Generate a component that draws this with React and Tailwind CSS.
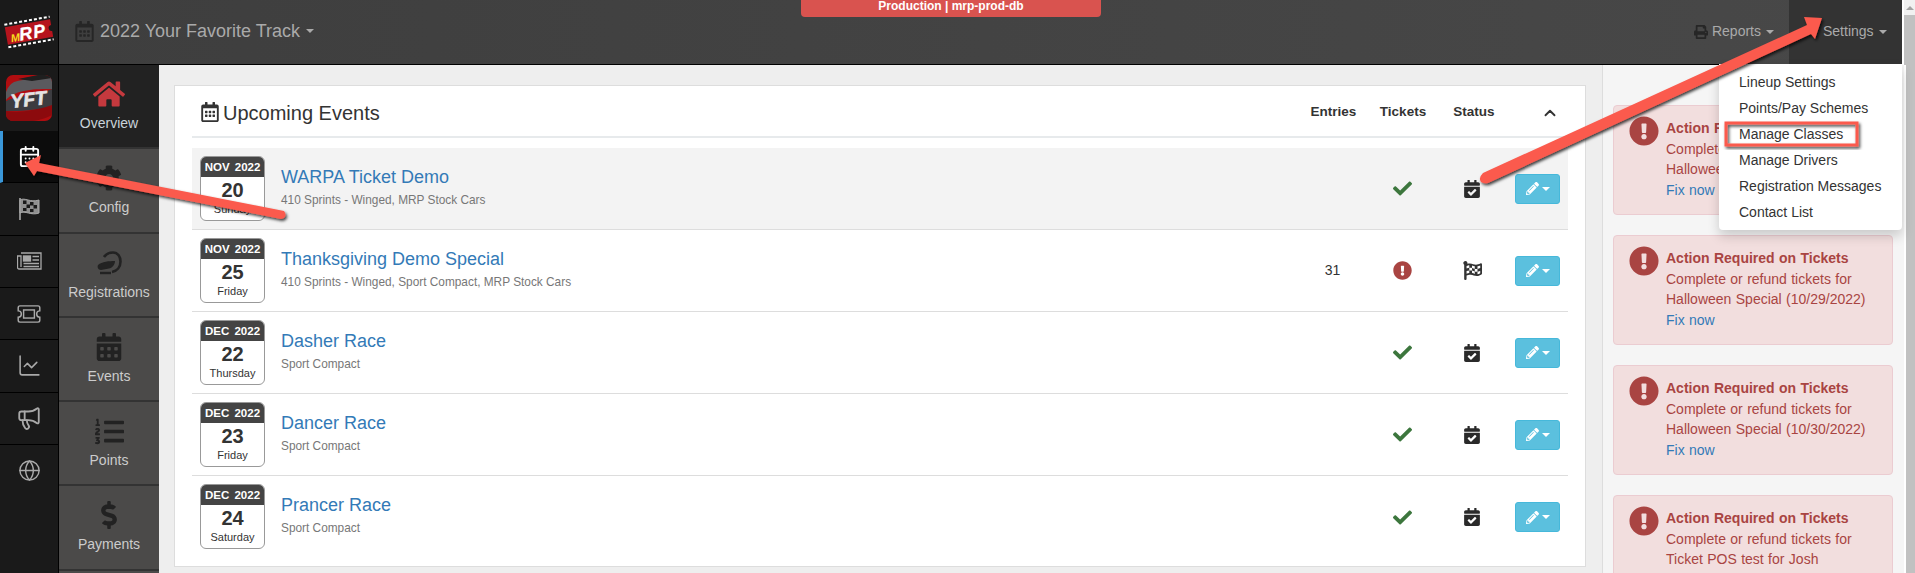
import React from "react";
import {
  FaCog, FaDollarSign, FaListOl, FaPrint, FaCheck, FaExclamationCircle, FaPencilAlt,
  FaCalendarCheck, FaFlagCheckered, FaRegCalendarAlt, FaCalendarAlt, FaHome,
} from "react-icons/fa";
import { ChartLine, Megaphone, Globe, ChevronUp, CalendarDays } from "lucide-react";

const Caret = ({ className = "" }) => (
  <span className={`inline-block w-0 h-0 border-x-[4px] border-x-transparent border-t-[4px] border-t-current ${className}`} />
);

const MrpLogo = () => (
  <svg width="50" height="34" viewBox="0 0 50 34">
    <g transform="rotate(-10 25 17)">
      <path d="M2 8 H48 V14 a3 3 0 0 0 0 6 V26 H2 Z" fill="#b5141d" />
      <path d="M2 5.5 H48" stroke="#fff" strokeWidth="2" strokeDasharray="3 2" />
      <path d="M2 28.5 H48" stroke="#fff" strokeWidth="2" strokeDasharray="3 2" />
      <text x="6" y="24" fontFamily="Liberation Sans" fontWeight="700" fontStyle="italic" fontSize="11" fill="#f7dc1d">M</text>
      <text x="15" y="24" fontFamily="Liberation Sans" fontWeight="700" fontStyle="italic" fontSize="18" fill="#fff" stroke="#fff" strokeWidth=".3" letterSpacing="1">RP</text>
    </g>
  </svg>
);

const YftLogo = () => (
  <svg width="46" height="46" viewBox="0 0 46 46" className="rounded-[7px]">
    <rect width="46" height="46" fill="#b00d10" />
    <path d="M0 46 V36 C14 38 30 36 46 28 V40 C38 44 30 46 24 46 Z" fill="#8c0a0d" />
    <path d="M8 7 C20 3 32 6 46 2 V14 C30 14 10 14 0 25 V17 C2 12 4 9 8 7 Z" fill="#5a5a5e" />
    <path d="M0 26 C12 20 30 22 46 14 V30 C30 36 14 36 0 36 Z" fill="#3c3c40" />
    <path d="M12 4 L32 0 L46 0 V3 L26 6 Z" fill="#1f1f1f" />
    <text x="22.5" y="31" textAnchor="middle" fontFamily="Liberation Sans" fontWeight="700" fontStyle="italic" fontSize="19" fill="#e4e4e4" stroke="#e4e4e4" strokeWidth=".7" transform="rotate(-6 23 25)">YFT</text>
  </svg>
);

const Helmet = () => (
  <svg width="25" height="24" viewBox="0 0 25 24" fill="none">
    <path d="M7 6 C9 3 12 1.5 16 1.5 C21 1.5 23.5 6 23.5 10.5 C23.5 16 20 20 15 21" stroke="#222" strokeWidth="2.6" />
    <path d="M1 14 C5 10.5 12 10 18 10 C18 14 15 17 12 17.5 L4 19 C1 19 0 16 1 14 Z" fill="#222" />
    <path d="M3 22 H14" stroke="#222" strokeWidth="2.4" />
  </svg>
);

const TicketIcon = () => (
  <svg width="26" height="18" viewBox="0 0 26 20" fill="none" stroke="#a9a9a9" strokeWidth="1.6">
    <path d="M3 1 H23 a2 2 0 0 1 2 2 V6.5 a3.5 3.5 0 0 0 0 7 V17 a2 2 0 0 1-2 2 H3 a2 2 0 0 1-2-2 V13.5 a3.5 3.5 0 0 0 0-7 V3 a2 2 0 0 1 2-2 Z" />
    <rect x="7" y="5.5" width="12" height="9" />
  </svg>
);

const FlagIcon = () => (
  <svg width="24" height="24" viewBox="0 0 24 24" fill="none">
    <path d="M3 1 V23" stroke="#a9a9a9" strokeWidth="1.6" />
    <path d="M3 3 C8 0 13 6 22 3 L22 16 C14 19 8 13 3 16 Z" fill="#8f8f8f" stroke="#a9a9a9" strokeWidth="1" />
    <g fill="#1a1a1a">
      <rect x="6" y="3.5" width="3.5" height="3.5" /><rect x="13" y="5" width="3.5" height="3.5" />
      <rect x="9.5" y="7.5" width="3.5" height="3.5" /><rect x="16.5" y="8" width="3.5" height="3.5" />
      <rect x="6" y="11" width="3.5" height="3" /><rect x="13" y="12" width="3.5" height="3" />
    </g>
  </svg>
);

const NewsIcon = () => (
  <svg width="25" height="18" viewBox="0 0 25 18" fill="none" stroke="#a9a9a9" strokeWidth="1.3">
    <path d="M4 1 H24 V17 H2 a1.5 1.5 0 0 1-1.5-1.5 V4 H4 V15" />
    <rect x="6.5" y="4" width="7" height="5" fill="#a9a9a9" />
    <path d="M15.5 4.5 H22 M15.5 8 H22 M6.5 11.5 H22 M6.5 14.5 H22" />
  </svg>
);

const railItems = [
  { icon: <CalendarDays size={23} strokeWidth={2} color="#fff" />, active: true },
  { icon: <FlagIcon /> },
  { icon: <NewsIcon /> },
  { icon: <TicketIcon /> },
  { icon: <ChartLine size={25} strokeWidth={1.5} color="#a9a9a9" /> },
  { icon: <Megaphone size={26} strokeWidth={1.7} color="#a9a9a9" /> },
  { icon: <Globe size={23} strokeWidth={1.5} color="#a9a9a9" /> },
];

const subItems = [
  { label: "Overview", icon: <FaHome size={32} color="#c5393e" />, active: true },
  { label: "Config", icon: <FaCog size={26} color="#222" /> },
  { label: "Registrations", icon: <Helmet /> },
  { label: "Events", icon: <FaCalendarAlt size={28} color="#222" /> },
  { label: "Points", icon: <FaListOl size={29} color="#222" /> },
  { label: "Payments", icon: <FaDollarSign size={28} color="#222" /> },
];

const events = [
  { m: "NOV 2022", d: "20", w: "Sunday", t: "WARPA Ticket Demo", s: "410 Sprints - Winged, MRP Stock Cars", e: "", ok: true, done: false, hl: true },
  { m: "NOV 2022", d: "25", w: "Friday", t: "Thanksgiving Demo Special", s: "410 Sprints - Winged, Sport Compact, MRP Stock Cars", e: "31", ok: false, done: true },
  { m: "DEC 2022", d: "22", w: "Thursday", t: "Dasher Race", s: "Sport Compact", e: "", ok: true },
  { m: "DEC 2022", d: "23", w: "Friday", t: "Dancer Race", s: "Sport Compact", e: "", ok: true },
  { m: "DEC 2022", d: "24", w: "Saturday", t: "Prancer Race", s: "Sport Compact", e: "", ok: true, last: true },
];

const alerts = [
  ["Halloween Special (10/28/2022)", true],
  ["Halloween Special (10/29/2022)", true],
  ["Halloween Special (10/30/2022)", true],
  ["Ticket POS test for Josh", false],
];

const menu = ["Lineup Settings", "Points/Pay Schemes", "Manage Classes", "Manage Drivers", "Registration Messages", "Contact List"];

function EventRow({ ev }) {
  return (
    <div className={`h-[82px] flex items-center pl-2 pr-2 ${ev.last ? "" : "border-b border-[#ddd]"} ${ev.hl ? "bg-[#f3f3f3]" : "bg-white"}`}>
      <div className="w-[65px] h-[65px] shrink-0 border border-[#999] rounded-[6px] bg-white overflow-hidden flex flex-col items-center mb-px">
        <div className="w-full h-[20px] shrink-0 bg-[#444] text-white text-[11.5px] font-bold leading-[20px] text-center [word-spacing:2px]">{ev.m}</div>
        <div className="text-[20px] font-bold text-[#333] leading-[23px] mt-[2px]">{ev.d}</div>
        <div className="text-[11px] text-[#333] leading-[14px]">{ev.w}</div>
      </div>
      <div className="ml-4 flex-1 min-w-0 mb-px">
        <div className="text-[18px] leading-[24px] text-[#337ab7]">{ev.t}</div>
        <div className="text-[11.85px] leading-[23px] text-[#777]">{ev.s}</div>
      </div>
      <div className="w-[70px] text-center text-[14px] text-[#333] pr-[1px]">{ev.e}</div>
      <div className="w-[70px] flex justify-center pr-[2px]">
        {ev.ok ? <FaCheck size={19} color="#3c763d" /> : <FaExclamationCircle size={19} color="#a94442" />}
      </div>
      <div className="w-[70px] flex justify-center pr-[2px]">
        {ev.done ? <FaFlagCheckered size={19} color="#333" /> : <FaCalendarCheck size={18} color="#2a2a2a" />}
      </div>
      <div className="ml-[7px] w-[45px] h-[30px] bg-[#5bc0de] border border-[#46b8da] rounded-[3px] flex items-center justify-center gap-[3px] text-white">
        <FaPencilAlt size={13} color="#fff" />
        <Caret />
      </div>
    </div>
  );
}

function Arrows() {
  return (
    <svg width="1915" height="573" viewBox="0 0 1915 573" className="absolute left-0 top-0 pointer-events-none">
      <defs>
        <filter id="sh" x="-5%" y="-20%" width="110%" height="140%">
          <feDropShadow dx="1.5" dy="2" stdDeviation="1.6" floodColor="#000" floodOpacity="0.75" />
        </filter>
      </defs>
      <g filter="url(#sh)">
        <path d="M25 163 L41 155 L39 163 L284 211 Q287 215 284 218 L281 219 L37 171 L34 176 Z" fill="#fb5a4d" />
        <path d="M1822 18 L1804 17 L1807 25 L1483 173 Q1478 178 1481 182 Q1484 184 1488 183 L1811 34 L1815 39 Z" fill="#fb5a4d" />
      </g>
      <rect x="1726" y="123" width="131" height="22" fill="none" stroke="#fb5a4d" strokeWidth="3" filter="url(#sh)" />
    </svg>
  );
}

export default function App() {
  return (
    <div className="relative w-[1915px] h-[573px] overflow-hidden flex bg-white font-['Liberation_Sans',Arial,sans-serif] text-[14px] text-[#333]">
      {/* rail */}
      <div className="w-[59px] shrink-0 bg-[#1a1a1a] border-r border-[#000] flex flex-col">
        <div className="h-[65px] border-b border-black flex items-center justify-center"><MrpLogo /></div>
        <div className="h-[66px] flex items-center justify-center"><YftLogo /></div>
        {railItems.map((r, i) => (
          <div key={i} className={`h-[52.33px] flex items-center justify-center border-b ${i === 6 ? "border-transparent" : "border-[#000]"} ${r.active ? "bg-[#0c0c0c] border-l-[3px] border-l-[#3a97d9] pr-[3px]" : ""}`}>
            {r.icon}
          </div>
        ))}
      </div>

      <div className="flex-1 min-w-0 flex flex-col">
        {/* header */}
        <div className="h-[65px] shrink-0 mr-[13px] relative flex items-center bg-gradient-to-r from-[#3e3e3e] to-[#484848] border-b border-black">
          <div className="pl-[15px] pb-[2px] flex items-center text-[#aaa] text-[18px]">
            <FaRegCalendarAlt size={21} color="#262626" />
            <span className="ml-[5px]">2022 Your Favorite Track</span>
            <Caret className="ml-[6px]" />
          </div>
          <div className="absolute left-[742px] top-0 w-[300px] h-[17px] bg-[#d9534f] rounded-b-[4px] text-white text-[12px] font-bold leading-[13px] text-center">Production | mrp-prod-db</div>
          <div className="ml-auto flex items-center text-[#aaa] text-[14px] pr-[15px] pb-px">
            <FaPrint size={14} color="#262626" />
            <span className="ml-[4px]">Reports</span>
            <Caret className="ml-[5px]" />
          </div>
          <div className="w-[113px] h-full bg-[#333] flex items-center text-[#aaa] pl-[34px] pb-px">
            <span>Settings</span>
            <Caret className="ml-[5px]" />
          </div>
        </div>

        <div className="flex-1 min-h-0 flex">
          {/* subnav */}
          <div className="w-[100px] shrink-0 bg-[#4b4a49] flex flex-col">
            {subItems.map((s) => (
              <div key={s.label} className={`h-[84.25px] shrink-0 flex flex-col items-center border-b-2 border-[#333] ${s.active ? "bg-[#222] text-[#c9d3da]" : "text-[#ccc]"}`}>
                <div className="h-[49px] w-full flex items-center justify-center pt-[9px]">{s.icon}</div>
                <div className="leading-[18px]">{s.label}</div>
              </div>
            ))}
          </div>

          {/* main */}
          <div className="w-[1443px] shrink-0 bg-[#eee] pt-5 pl-[15px] pr-[16px] overflow-hidden">
            <div className="h-[482px] bg-white border border-[#ddd] px-[17px]">
              <div className="h-[52px] border-b-2 border-[#e7eaec] flex items-center pl-2 pr-2 pt-[3px]">
                <FaRegCalendarAlt size={20} color="#333" className="mb-px" />
                <span className="ml-[3px] text-[20px] flex-1">Upcoming Events</span>
                <div className="w-[70px] text-center font-bold text-[13.5px] pl-[1px]">Entries</div>
                <div className="w-[70px] text-center font-bold text-[13.5px]">Tickets</div>
                <div className="w-[70px] text-center font-bold text-[13.5px] pl-[2px]">Status</div>
                <div className="w-[52px] flex justify-end pr-[1px]"><ChevronUp size={18} strokeWidth={2.5} color="#333" /></div>
              </div>
              <div className="mt-[10px]">
                {events.map((ev) => <EventRow key={ev.t} ev={ev} />)}
              </div>
            </div>
          </div>

          {/* right */}
          <div className="w-[302px] shrink-0 bg-[#f5f5f5] border-l border-[#ddd] pt-10 pl-[10px] pr-[11px] flex flex-col gap-5 overflow-hidden">
            {alerts.map(([txt, fix], i) => (
              <div key={i} className="h-[110px] shrink-0 bg-[#f2dede] border border-[#ebccd1] rounded-[4px] pl-[15px] pt-[10px] flex">
                <FaExclamationCircle size={30} color="#a94442" className="shrink-0" />
                <div className="ml-[7px] text-[14px] leading-[20px] text-[#a94442] [word-spacing:0.5px]">
                  <div className="font-bold mt-[2px] mb-px">Action Required on Tickets</div>
                  <div>Complete or refund tickets for</div>
                  <div>{txt}</div>
                  {fix && <div className="text-[#337ab7] mt-px">Fix now</div>}
                </div>
              </div>
            ))}
          </div>

          {/* scrollbar */}
          <div className="w-[13px] shrink-0 bg-white pl-[2px] flex flex-col">
            <div className="flex-1 bg-[#c1c1c1]" />
          </div>
        </div>
      </div>

      {/* dropdown */}
      <div className="absolute left-[1719px] top-[64px] w-[183px] h-[166px] bg-white rounded-b-[4px] shadow-[0_6px_12px_rgba(0,0,0,0.175)] py-[5px]">
        {menu.map((m) => (
          <div key={m} className="h-[26px] pl-5 leading-[26px] text-[14px] text-[#333]">{m}</div>
        ))}
      </div>

      {/* scrollbar column over the header */}
      <div className="absolute left-[1902px] top-0 w-[13px] h-[65px] bg-white pl-[2px] flex flex-col">
        <div className="h-[15px] bg-[#f1f1f1] flex items-center justify-center">
          <span className="w-0 h-0 border-x-[4px] border-x-transparent border-b-[4px] border-b-[#a3a3a3]" />
        </div>
        <div className="flex-1 bg-[#c1c1c1]" />
      </div>

      <Arrows />
    </div>
  );
}
